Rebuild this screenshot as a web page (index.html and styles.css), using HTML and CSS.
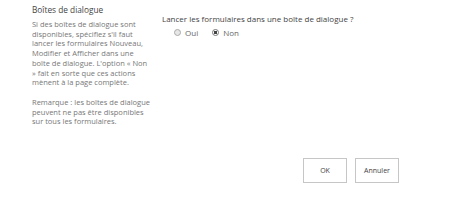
FILE: index.html
```html
<!DOCTYPE html>
<html lang="fr">
<head>
    <meta charset="UTF-8">
    <title>Boites de dialogue</title>
    <link rel="stylesheet" href="styles.css">
</head>
<body>
    <div class="page">
        <div class="section">
            <div class="description">
                <h3>Boîtes de dialogue</h3>
                <p>Si des boîtes de dialogue sont disponibles, spécifiez s'il faut lancer les formulaires Nouveau, Modifier et Afficher dans une boîte de dialogue. L'option « Non » fait en sorte que ces actions mènent à la page complète.</p>
                <p>Remarque : les boîtes de dialogue peuvent ne pas être disponibles sur tous les formulaires.</p>
            </div>
            <div class="field">
                <div class="label">Lancer les formulaires dans une boîte de dialogue ?</div>
                <div class="options">
                    <label><input type="radio" name="dlg"> Oui</label>
                    <label><input type="radio" name="dlg" checked> Non</label>
                </div>
            </div>
        </div>
        <div class="buttons">
            <button>OK</button>
            <button>Annuler</button>
        </div>
    </div>
</body>
</html>
```
FILE: styles.css
```css
body {
    margin: 0;
    font-family: 'Open Sans', 'Noto Sans', sans-serif;
    background-color: #fff;
}
.page {
    width: 400px;
    padding: 4px 0 0 32px;
}
.section {
    display: flex;
}
.description {
    width: 118px;
    margin-right: 12px;
}
.description h3 {
    margin: 0 0 5px;
    font-size: 8.3px;
    font-weight: normal;
    color: #444;
}
.description p {
    margin: 0 0 10px;
    font-size: 7.5px;
    line-height: 9.7px;
    color: #777;
}
.field {
    padding-top: 9px;
}
.label {
    font-size: 8px;
    color: #444;
}
.options {
    display: flex;
    gap: 14px;
    margin: 3px 0 0 12px;
    font-size: 8px;
    color: #666;
}
.options label {
    display: flex;
    align-items: center;
}
.options input {
    appearance: none;
    width: 7px;
    height: 7px;
    margin: 0 4px 0 0;
    border: 1px solid #aaa;
    border-radius: 50%;
    background-color: #e6e6e6;
    box-sizing: border-box;
}
.options input:checked {
    background-color: #fff;
    border-color: #777;
    background-image: radial-gradient(circle, #444 0, #444 1.5px, transparent 2px);
}
.buttons {
    display: flex;
    justify-content: flex-end;
    gap: 8px;
    margin-top: 21px;
    width: 367px;
}
.buttons button {
    min-width: 44px;
    height: 25px;
    background-color: #fff;
    border: 1px solid #c6c6c6;
    font-family: inherit;
    font-size: 7px;
    color: #444;
    padding: 0 7px;
}
```
